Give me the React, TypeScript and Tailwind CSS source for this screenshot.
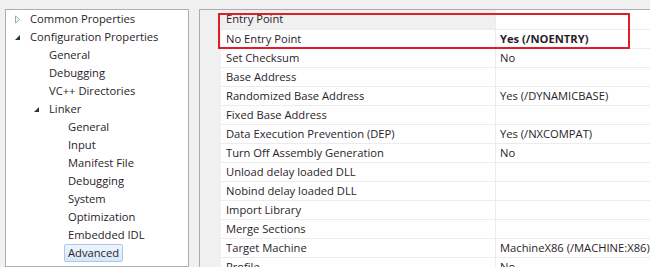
import React from 'react';

type TreeItem = { label: string; level: number; toggle?: 'open' | 'closed'; selected?: boolean };

const tree: TreeItem[] = [
  { label: 'Common Properties', level: 0, toggle: 'closed' },
  { label: 'Configuration Properties', level: 0, toggle: 'open' },
  { label: 'General', level: 1 },
  { label: 'Debugging', level: 1 },
  { label: 'VC++ Directories', level: 1 },
  { label: 'Linker', level: 1, toggle: 'open' },
  { label: 'General', level: 2 },
  { label: 'Input', level: 2 },
  { label: 'Manifest File', level: 2 },
  { label: 'Debugging', level: 2 },
  { label: 'System', level: 2 },
  { label: 'Optimization', level: 2 },
  { label: 'Embedded IDL', level: 2 },
  { label: 'Advanced', level: 2, selected: true },
  { label: 'Command Line', level: 2 },
];

const props: { name: string; value?: string; bold?: boolean; header?: boolean }[] = [
  { name: 'Entry Point', header: true },
  { name: 'No Entry Point', value: 'Yes (/NOENTRY)', bold: true },
  { name: 'Set Checksum', value: 'No' },
  { name: 'Base Address' },
  { name: 'Randomized Base Address', value: 'Yes (/DYNAMICBASE)' },
  { name: 'Fixed Base Address' },
  { name: 'Data Execution Prevention (DEP)', value: 'Yes (/NXCOMPAT)' },
  { name: 'Turn Off Assembly Generation', value: 'No' },
  { name: 'Unload delay loaded DLL' },
  { name: 'Nobind delay loaded DLL' },
  { name: 'Import Library' },
  { name: 'Merge Sections' },
  { name: 'Target Machine', value: 'MachineX86 (/MACHINE:X86)' },
  { name: 'Profile', value: 'No' },
];

const Toggle: React.FC<{ kind: 'open' | 'closed' }> = ({ kind }) =>
  kind === 'closed' ? (
    <svg width="9" height="9" viewBox="0 0 9 9" className="shrink-0">
      <path d="M2.5 1 L6.5 4.5 L2.5 8 Z" fill="none" stroke="#a6a6a6" strokeWidth="1" />
    </svg>
  ) : (
    <svg width="9" height="9" viewBox="0 0 9 9" className="shrink-0">
      <path d="M7 2 L7 7 L2 7 Z" fill="#333333" />
    </svg>
  );

export default function App() {
  return (
    <div
      className="relative h-[267px] w-[650px] overflow-hidden bg-[#f0f0f0] text-[11.2px] text-[#2a1d2a]"
      style={{ fontFamily: '"Open Sans", "Noto Sans", sans-serif' }}
    >
      <div className="flex h-full pt-[9px] pl-[5px]">
        {/* tree */}
        <div className="w-[184px] shrink-0 border border-[#a9aeb6] bg-white">
          {tree.map((t, i) => (
            <div key={i} className="flex h-[18px] items-center" style={{ paddingLeft: 7 + t.level * 19 }}>
              <div className="flex w-[17px] justify-start">{t.toggle && <Toggle kind={t.toggle} />}</div>
              <span
                className={
                  t.selected
                    ? '-ml-[4px] rounded-[2px] border border-[#a8c8ec] bg-gradient-to-b from-[#eef5fd] to-[#d7e7fa] px-[3px] leading-[16px]'
                    : 'leading-[16px]'
                }
              >
                {t.label}
              </span>
            </div>
          ))}
        </div>

        {/* splitter */}
        <div className="w-[10px] shrink-0" />

        {/* property grid */}
        <div className="flex flex-1 border-l border-t border-[#a9aeb6] bg-[#f0f0f0]">
          <div className="w-[21px] shrink-0" />
          <div className="flex-1 bg-white">
            {props.map((p, i) => (
              <div
                key={i}
                className={`flex border-b border-[#ececec] ${i === 0 ? 'h-[20px]' : 'h-[19px]'}`}
              >
                <div
                  className={`flex w-[275px] shrink-0 items-center border-r border-[#ececec] pl-[5px] ${
                    p.header ? 'bg-[#f0f0f0]' : ''
                  }`}
                >
                  {p.name}
                </div>
                <div className={`flex flex-1 items-center pl-[4px] whitespace-nowrap ${p.bold ? 'font-bold' : ''}`}>
                  {p.value}
                </div>
              </div>
            ))}
          </div>
        </div>
      </div>

      {/* highlight box */}
      <div className="absolute left-[218px] top-[13px] h-[36px] w-[412px] border-2 border-[#dd1f2a]" />
    </div>
  );
}
